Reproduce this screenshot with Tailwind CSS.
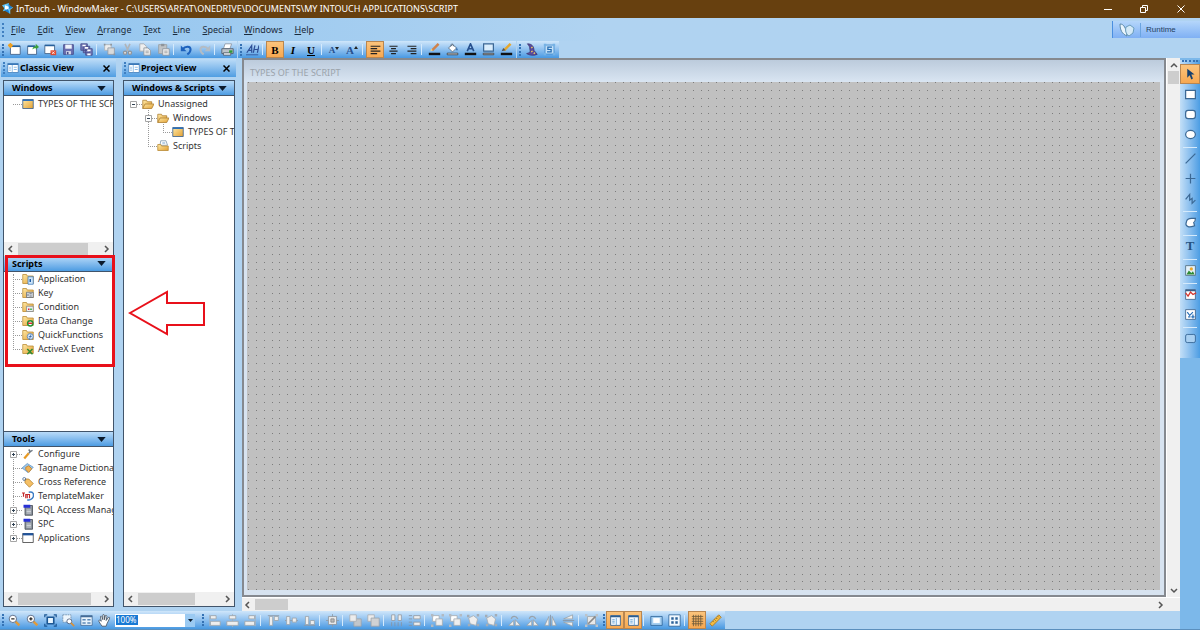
<!DOCTYPE html>
<html lang="en">
<head>
    <meta charset="UTF-8">
    <meta name="viewport" content="width=device-width, initial-scale=1.0">
    <script src="https://cdn.jsdelivr.net/npm/@tailwindcss/browser@4"></script>
    <title>InTouch - WindowMaker</title>
</head>
<body class="h-screen flex flex-col overflow-hidden bg-[#b0d3f1] font-['Noto_Sans',sans-serif] text-[9px] leading-[14px] text-[#333]">

    <!-- icons, all on a 16x16 box -->
    <svg class="absolute size-0" xmlns="http://www.w3.org/2000/svg">
        <linearGradient id="gold" x2="1" y2="1"><stop stop-color="#ffe9a6"/><stop offset="1" stop-color="#e2a033"/></linearGradient>
        <symbol id="new" viewBox="0 0 16 16"><path d="M3 4h12v10H3z" fill="#fff" stroke="#3c5a80"/><path d="M3 4h12" stroke="#27609c" stroke-width="2"/><path d="M3 0v6M0 3h6M1 1l4 4M5 1L1 5" stroke="#f0a020" stroke-width="1.5"/></symbol>
        <symbol id="open" viewBox="0 0 16 16"><path d="M2 4h11v10H2z" fill="#fff" stroke="#3c5a80"/><path d="M2 4h9" stroke="#27609c" stroke-width="2"/><path d="M8 8c0-3 2-4 4-4V1l4 4-4 3V6c-2 0-3 1-4 2" fill="#3aa03a"/></symbol>
        <symbol id="close" viewBox="0 0 16 16"><path d="M1 3h12v10H1z" fill="#fff" stroke="#3c5a80"/><path d="M1 3h12" stroke="#27609c" stroke-width="2"/><path d="M8 9h7v6H8z" fill="#e04a30"/><path d="M10 10.500l3 3M13 10.500l-3 3" stroke="#fff"/></symbol>
        <symbol id="save" viewBox="0 0 16 16"><path d="M2 2h12v12H2z" fill="#6a6eb0" stroke="#454b88"/><path d="M4 2h8v5H4z" fill="#eef2fa"/><path d="M5 10h6v4H5z" fill="#d7dbea"/><path d="M6 11h2v3H6z" fill="#454b88"/></symbol>
        <symbol id="saveall" viewBox="0 0 16 16"><g stroke="#454b88" fill="#7378b8"><path d="M1 1h8v8H1zM4 4h8v8H4zM7 7h8v8H7z"/></g><path d="M3 2h4v2H3zM6 5h4v2H6zM9 8h4v2H9zM9 13h4v2H9z" fill="#fff"/></symbol>
        <symbol id="dup" viewBox="0 0 16 16"><path d="M2 2h8v7H2z" fill="#ededed" stroke="#a9b1ba"/><path d="M6 6h8v8H6z" fill="#d9dadb" stroke="#929aa3"/><path d="M1 1h2v2H1zM9 1h2v2H9zM13 13h2v2h-2z" fill="#8d959d"/></symbol>
        <symbol id="cut" viewBox="0 0 16 16"><path d="M5 1l4 9M11 1l-4 9" stroke="#b0b4b9" stroke-width="2" fill="none"/><g fill="#ddd" stroke="#90959c" stroke-width="1.5"><circle cx="5" cy="12" r="2"/><circle cx="11" cy="12" r="2"/></g></symbol>
        <symbol id="copy" viewBox="0 0 16 16"><path d="M1 1h5l3 3v6H1z" fill="#eee" stroke="#a0a8b0"/><path d="M6 6h5l3 3v6H6z" fill="#eee" stroke="#8d949c"/><path d="M8 10h4M8 12h4" stroke="#999"/></symbol>
        <symbol id="paste" viewBox="0 0 16 16"><path d="M2 2h10v11H2z" fill="#bfc2c5" stroke="#989ea4"/><path d="M5 1h4v3H5z" fill="#8e949a"/><path d="M7 7h8v8H7z" fill="#eee" stroke="#8d949c"/><path d="M9 10h4M9 12h4" stroke="#999"/></symbol>
        <symbol id="undo" viewBox="0 0 16 16"><path d="M3 8c4-5 10-4 10 0 0 2-1 4-4 6" fill="none" stroke="#1d62bd" stroke-width="2.5"/><path d="M1 3v7h7z" fill="#1d62bd"/></symbol>
        <symbol id="redo" viewBox="0 0 16 16"><path d="M13 8C9 3 3 4 3 8c0 2 1 4 4 6" fill="none" stroke="#b3bcc5" stroke-width="2.5"/><path d="M15 3v7H8z" fill="#b3bcc5"/></symbol>
        <symbol id="print" viewBox="0 0 16 16"><path d="M5 1h8l-2 6H3z" fill="#fff" stroke="#8691a0"/><path d="M1 7h14v6H1z" fill="#bcc3ca" stroke="#4c5966"/><path d="M3 12h9v3H3z" fill="#e9edf0" stroke="#4c5966"/><path d="M10 9h4v3h-4z" fill="#2d9a36"/></symbol>
        <symbol id="font" viewBox="0 0 16 16"><path d="M1 12L7 3v9M3 9h4M9 12l2-9M14 12l2-9M10 8h5" stroke="#2e4f96" stroke-width="1.5" fill="none"/><path d="M0 14.500h15" stroke="#2e4f96"/></symbol>
        <symbol id="left" viewBox="0 0 16 16"><path d="M2 4h12M2 7h8M2 10h12M2 13h8" stroke="#222" stroke-width="1.5"/></symbol>
        <symbol id="center" viewBox="0 0 16 16"><path d="M3 4h10M5 7h6M3 10h10M5 13h6" stroke="#222" stroke-width="1.5"/></symbol>
        <symbol id="right" viewBox="0 0 16 16"><path d="M3 4h11M7 7h7M3 10h11M7 13h7" stroke="#222" stroke-width="1.5"/></symbol>
        <symbol id="linecol" viewBox="0 0 16 16"><path d="M5 9l8-8" stroke="#cf824b" stroke-width="3"/><path d="M3 10l1-3 2 2z" fill="#f6d77c"/><path d="M1 12h14v3H1z" fill="#111"/></symbol>
        <symbol id="fillcol" viewBox="0 0 16 16"><path d="M3 6l5-4 5 4-5 5z" fill="#fff" stroke="#567"/><path d="M6 4c0-4 3-4 3 0" stroke="#567" fill="none"/><path d="M13 5l2 4h-3z" fill="#3f79b8"/><path d="M1.500 12.500h13v2h-13z" fill="#fff" stroke="#333"/></symbol>
        <symbol id="textcol" viewBox="0 0 16 16"><path d="M4 10l4-9 4 9M5 7h6" stroke="#27508e" stroke-width="2" fill="none"/><path d="M1 12h14v3H1z" fill="#111"/></symbol>
        <symbol id="wincol" viewBox="0 0 16 16"><path d="M2 1h12v9H2z" fill="#d9ecfb" stroke="#3a6694" stroke-width="1.5"/><path d="M1.500 12.500h13v2h-13z" fill="#aaa" stroke="#444"/></symbol>
        <symbol id="transcol" viewBox="0 0 16 16"><path d="M5 9l8-8" stroke="#e6a72c" stroke-width="3"/><path d="M2 10l2-4 3 3z" fill="#555"/><path d="M1 12h14v3H1z" fill="#111"/></symbol>
        <symbol id="wizard" viewBox="0 0 16 16"><path d="M3 1c6 0 8 4 8 8l4 5c-5 2-10 1-13-1 4-1 5-2 4-5C6 5 5 3 3 1z" fill="#5b4b9c" stroke="#3d3774"/><path d="M8 5l1 1M8 10l1 1M11 12l1 1" stroke="#ffd858" stroke-width="2"/></symbol>
        <symbol id="symbol" viewBox="0 0 16 16"><path d="M2.500 2.500h11v11h-11z" fill="#c3e0f8" stroke="#3e88c9"/><path d="M1 1h3v3H1zM12 1h3v3h-3zM1 12h3v3H1zM12 12h3v3h-3z" fill="#75b2e5"/><path d="M11 5H6v3h4v3H5" stroke="#2069b0" fill="none" stroke-width="1.5"/></symbol>

        <symbol id="zoomout" viewBox="0 0 16 16"><path d="M9 9l5 5" stroke="#e09b3c" stroke-width="3"/><circle cx="6" cy="6" r="4.500" fill="#fff" stroke="#4a5a78"/><path d="M4 6h4" stroke="#222" stroke-width="1.5"/></symbol>
        <symbol id="zoomin" viewBox="0 0 16 16"><path d="M9 9l5 5" stroke="#e09b3c" stroke-width="3"/><circle cx="6" cy="6" r="4.500" fill="#fff" stroke="#4a5a78"/><path d="M4 6h4M6 4v4" stroke="#222" stroke-width="1.5"/></symbol>
        <symbol id="zoomfit" viewBox="0 0 16 16"><path d="M4 4h8v8H4z" fill="#e7f5ff" stroke="#1c5794" stroke-width="2"/><path d="M1 4V1h3M12 1h3v3M1 12v3h3M12 15h3v-3" stroke="#1c5794" fill="none" stroke-width="1.5"/></symbol>
        <symbol id="zoomsel" viewBox="0 0 16 16"><path d="M1 1h10v9H1z" fill="#edf6fd" stroke="#6c8aa8" stroke-dasharray="2 1"/><circle cx="9" cy="9" r="3" fill="#fff" stroke="#4a5a78"/><path d="M11 11l4 4" stroke="#d8913a" stroke-width="2"/></symbol>
        <symbol id="panels" viewBox="0 0 16 16"><path d="M1 2h14v12H1z" fill="#e9f4fd" stroke="#426b98"/><path d="M1 3h14" stroke="#426b98" stroke-width="2"/><path d="M3 6h4v2H3zM9 6h4v2H9zM3 10h4v2H3zM9 10h4v2H9z" fill="#5c88b7"/></symbol>
        <symbol id="hand" viewBox="0 0 16 16"><path d="M5 15C3 12 1 10 1 8c1-1 2 0 3 1L3 3c1-1 2 0 2 1l1 3V1c1-1 2 0 2 1v5l1-5c1-1 2 0 2 1l-1 5 3-4c1 0 2 0 1 2l-3 6-1 3z" fill="#fff" stroke="#44505e"/></symbol>

        <symbol id="al" viewBox="0 0 16 16"><path d="M2 1v14" stroke="#a6b2be"/><path d="M3 2h7v4H3zM3 9h12v5H3z" fill="#eee" stroke="#9aa2aa"/></symbol>
        <symbol id="ac" viewBox="0 0 16 16"><path d="M8 0v16" stroke="#a6b2be"/><path d="M4 2h8v4H4zM1 9h14v5H1z" fill="#eee" stroke="#9aa2aa"/></symbol>
        <symbol id="ar" viewBox="0 0 16 16"><path d="M14 1v14" stroke="#a6b2be"/><path d="M6 2h7v4H6zM1 9h12v5H1z" fill="#eee" stroke="#9aa2aa"/></symbol>
        <symbol id="at" viewBox="0 0 16 16"><path d="M1 2h14" stroke="#8d99a6"/><path d="M3 3h4v11H3zM9 3h5v5H9z" fill="#eee" stroke="#9aa2aa"/></symbol>
        <symbol id="am" viewBox="0 0 16 16"><path d="M0 8h16" stroke="#8d99a6"/><path d="M2 3h4v10H2zM9 5h5v5H9z" fill="#eee" stroke="#9aa2aa"/></symbol>
        <symbol id="ab" viewBox="0 0 16 16"><path d="M1 14h14" stroke="#8d99a6"/><path d="M3 3h4v10H3zM9 8h5v5H9z" fill="#eee" stroke="#9aa2aa"/></symbol>
        <symbol id="mid" viewBox="0 0 16 16"><path d="M8 0v16M0 8h16" stroke="#8d99a6"/><path d="M3 3h10v10H3z" fill="#e8e8e8" stroke="#8b939b"/><path d="M6 6h4v4H6z" fill="#bbb" stroke="#888"/></symbol>
        <symbol id="back" viewBox="0 0 16 16"><path d="M6 6h9v9H6z" fill="#c2c6ca" stroke="#9da4ab"/><path d="M1 1h8v8H1z" fill="#ececec" stroke="#a7adb3"/></symbol>
        <symbol id="front" viewBox="0 0 16 16"><path d="M1 1h8v8H1z" fill="#ececec" stroke="#a7adb3"/><path d="M5 5h10v10H5z" fill="#d0d2d4" stroke="#9da4ab"/></symbol>
        <symbol id="sh" viewBox="0 0 16 16"><path d="M2 1h4v7H2zM10 1h4v7h-4z" fill="#eee" stroke="#929aa2"/><path d="M2 10v5M6 10v5M10 10v5M14 10v5" stroke="#8793a0"/></symbol>
        <symbol id="sv" viewBox="0 0 16 16"><path d="M7 2h8v4H7zM7 10h8v4H7z" fill="#eee" stroke="#929aa2"/><path d="M1 2h4M1 6h4M1 10h4M1 14h4" stroke="#8793a0"/></symbol>
        <symbol id="grp" viewBox="0 0 16 16"><path d="M2 2h8v7H2z" fill="#fff" stroke="#a6acb2"/><path d="M6 6h8v8H6z" fill="#eee" stroke="#a6acb2"/><path d="M0 0h3v3H0zM13 0h3v3h-3zM0 13h3v3H0z" fill="#b2bac2"/></symbol>
        <symbol id="rot" viewBox="0 0 16 16"><path d="M2 5l6-3 5 4-2 8-7-2z" fill="#eee" stroke="#a6acb2"/><path d="M0 1h3v3H0zM12 0h3v3h-3zM12 12h3v3h-3zM1 12h3v3H1z" fill="#a4adb6"/></symbol>
        <symbol id="rotl" viewBox="0 0 16 16"><path d="M1 14h6V8zM9 7l6 7H9z" fill="#eee" stroke="#99a2aa"/><path d="M4 6c1-4 6-4 8 0" fill="none" stroke="#99a2aa" stroke-width="1.5"/></symbol>
        <symbol id="fliph" viewBox="0 0 16 16"><path d="M1 14h5V3zM10 3v11h5z" fill="#eee" stroke="#99a2aa"/><path d="M8 1v14" stroke="#8793a0"/></symbol>
        <symbol id="flipv" viewBox="0 0 16 16"><path d="M2 6h11V1zM2 10h11v5z" fill="#eee" stroke="#99a2aa"/><path d="M1 8h14" stroke="#8793a0"/></symbol>
        <symbol id="reshape" viewBox="0 0 16 16"><path d="M3 3h10v10H3z" fill="#e8e8e8" stroke="#9aa2aa"/><path d="M4 12l9-9" stroke="#888" stroke-width="2"/><path d="M0 0h3v3H0zM13 0h3v3h-3zM0 13h3v3H0zM13 13h3v3h-3z" fill="#bcc3ca"/></symbol>
        <symbol id="win" viewBox="0 0 16 16"><path d="M2 2h12v12H2z" fill="#f3f9fe" stroke="#2a5c90"/><path d="M2 3h12" stroke="#2a5c90" stroke-width="2"/><path d="M9 5v9M4 7h3M4 9h3M4 11h3" stroke="#5d9bd1"/></symbol>
        <symbol id="full" viewBox="0 0 16 16"><path d="M1 3h14v11H1z" fill="#a6cff1" stroke="#2c6299"/><path d="M4 5h8v6H4z" fill="#fff"/></symbol>
        <symbol id="expand" viewBox="0 0 16 16"><path d="M1 1h14v14H1z" fill="#f2f9ff" stroke="#2c6299"/><path d="M4 4h3v3H4zM9 4h3v3H9zM4 9h3v3H4zM9 9h3v3H9z" fill="#2c6299"/></symbol>
        <symbol id="grid" viewBox="0 0 16 16"><path d="M1 3h14M1 6h14M1 9h14M1 12h14M3 1v14M6 1v14M9 1v14M12 1v14" stroke="#6d5a3a"/></symbol>
        <symbol id="ruler" viewBox="0 0 16 16"><path d="M1 12L12 1l3 3L4 15z" fill="#f5bc42" stroke="#a8741c"/><path d="M5 9l1 1M7 7l1 1M9 5l1 1M11 3l1 1" stroke="#604310"/></symbol>

        <symbol id="pointer" viewBox="0 0 16 16"><path d="M4 1v11l3-3 2 5 2-1-2-5h4z" fill="#15406f"/></symbol>
        <symbol id="rect" viewBox="0 0 16 16"><path d="M2 3h12v10H2z" fill="#fff" stroke="#3b6894" stroke-width="1.5"/></symbol>
        <symbol id="rrect" viewBox="0 0 16 16"><rect x="2" y="3" width="12" height="10" rx="3" fill="#fff" stroke="#3b6894" stroke-width="1.5"/></symbol>
        <symbol id="oval" viewBox="0 0 16 16"><ellipse cx="8" cy="8" rx="6" ry="5" fill="#fff" stroke="#3b6894" stroke-width="1.5"/></symbol>
        <symbol id="line" viewBox="0 0 16 16"><path d="M2 14L14 2" stroke="#3b6894" stroke-width="1.5"/></symbol>
        <symbol id="cross" viewBox="0 0 16 16"><path d="M8 2v12M2 8h12" stroke="#3b6894" stroke-width="1.5"/></symbol>
        <symbol id="poly" viewBox="0 0 16 16"><path d="M2 9l5-6v7l3-2v6l4-4" fill="none" stroke="#3b6894" stroke-width="1.5"/></symbol>
        <symbol id="shape" viewBox="0 0 16 16"><path d="M3 7c1-4 4-4 6-4h5c0 3 0 4-2 5l1 4c-3 1-5 2-8 1-3-1-3-3-2-6z" fill="#fff" stroke="#3b6894" stroke-width="1.5"/></symbol>
        <symbol id="bitmap" viewBox="0 0 16 16"><path d="M2 2h12v12H2z" fill="#e4f2fc" stroke="#4f6a7a"/><path d="M3 13l3-5 3 3 2-2 2 4z" fill="#2f8a33"/><circle cx="9" cy="6" r="2" fill="#eda72b"/></symbol>
        <symbol id="trend" viewBox="0 0 16 16"><path d="M2 2h12v12H2z" fill="#fff" stroke="#3b5f86"/><path d="M2 3h12" stroke="#3b5f86" stroke-width="2"/><path d="M2 6l3 4 3-5 3 3 4-2" fill="none" stroke="#d3352c" stroke-width="1.5"/></symbol>
        <symbol id="hist" viewBox="0 0 16 16"><path d="M2 2h12v12H2z" fill="#fff" stroke="#3b5f86"/><path d="M4 5l3 4 4-4M5 11h3M11 8v5M9 11h4" fill="none" stroke="#2a70b8" stroke-width="1.5"/></symbol>
        <symbol id="btn" viewBox="0 0 16 16"><rect x="2" y="3" width="12" height="10" rx="2" fill="#a9d0f2" stroke="#2c5c8d"/></symbol>

        <symbol id="view" viewBox="0 0 16 16"><path d="M1 2h14v12H1z" fill="#fff" stroke="#3a78b8"/><path d="M1 3h14" stroke="#3a78b8" stroke-width="2"/><path d="M7 4v10M3 7h2M3 9h2M3 11h2M9 7h4M9 10h4" stroke="#6aa7dd"/></symbol>
        <symbol id="twin" viewBox="0 0 16 16"><path d="M1 2h14v12H1z" fill="url(#gold)" stroke="#28548a"/><path d="M1 3h14" stroke="#2c70b8" stroke-width="2"/></symbol>
        <symbol id="folder" viewBox="0 0 16 16"><path d="M1 14V3h5l1 2h6v3" fill="url(#gold)" stroke="#a97a2b"/><path d="M1 14l3-6h12l-3 6z" fill="url(#gold)" stroke="#a97a2b"/></symbol>
        <symbol id="cfolder" viewBox="0 0 16 16"><path d="M1 14V2h5l1 2h8v10z" fill="url(#gold)" stroke="#b5852f"/></symbol>
        <symbol id="f-app" viewBox="0 0 16 16"><use href="#cfolder"/><path d="M8 5h7v10H8z" fill="#cfe6fa" stroke="#3a77b8"/><path d="M11 8v4" stroke="#1f5ca6" stroke-width="2"/></symbol>
        <symbol id="f-key" viewBox="0 0 16 16"><use href="#cfolder"/><path d="M6 7h9v7H6z" fill="#d9dde2" stroke="#606b78"/><path d="M8 9v3M10 9h3M10 12h3" stroke="#4b5663"/></symbol>
        <symbol id="f-cond" viewBox="0 0 16 16"><use href="#cfolder"/><path d="M6 7h9v7H6z" fill="#eceff1" stroke="#808992"/><path d="M8 10h2v2H8z" fill="#d23"/><path d="M11 10h2v2h-2z" fill="#2a3"/></symbol>
        <symbol id="f-data" viewBox="0 0 16 16"><use href="#cfolder"/><circle cx="11" cy="11" r="3.500" fill="#fff" stroke="#239034" stroke-width="2"/><path d="M8 11h6" stroke="#d03030" stroke-width="2"/></symbol>
        <symbol id="f-quick" viewBox="0 0 16 16"><use href="#cfolder"/><circle cx="11" cy="10" r="4" fill="#d9e9fa" stroke="#4a78b0"/><path d="M12 7l-2 7M9 10h4" stroke="#2c62a5"/></symbol>
        <symbol id="f-ax" viewBox="0 0 16 16"><use href="#cfolder"/><path d="M7 8l7 7M14 8l-7 7" stroke="#2b8b32" stroke-width="2"/></symbol>
        <symbol id="f-script" viewBox="0 0 16 16"><path d="M5 1h7l2 6H4z" fill="#fff" stroke="#7790a8"/><path d="M1 14V6h4l1 2h9v6z" fill="url(#gold)" stroke="#b5852f"/><path d="M7 4h4" stroke="#4480b8"/></symbol>
        <symbol id="config" viewBox="0 0 16 16"><path d="M3 14l6-7" stroke="#e79a25" stroke-width="3"/><path d="M9 7l3-3M9 2l2 3M14 3l-3 2" stroke="#6d7680" stroke-width="2"/></symbol>
        <symbol id="tagdict" viewBox="0 0 16 16"><path d="M0 8l7-6 8 5-7 7z" fill="#9cc7ec" stroke="#5f92c0"/><path d="M5 7l4-2 4 4-4 5-4-4z" fill="#f1b356" stroke="#b77a28"/></symbol>
        <symbol id="xref" viewBox="0 0 16 16"><path d="M4 4h5l6 6-5 5-6-6z" fill="#f5c065" stroke="#ae7a26"/><circle cx="3" cy="4" r="2" fill="none" stroke="#3c6090"/></symbol>
        <symbol id="tmaker" viewBox="0 0 16 16"><path d="M9 3c6-1 7 2 6 6-1 3-5 5-8 4" fill="none" stroke="#3b7cc4" stroke-width="2"/><path d="M0 4h4M2 4v5M5 11V6h2v5M7 6h3v5" fill="none" stroke="#c2282c" stroke-width="1.5"/></symbol>
        <symbol id="server" viewBox="0 0 16 16"><path d="M4 2h10v13H4z" fill="#8d949d" stroke="#3c434c"/><path d="M2 1h9v4H2z" fill="#2730d6"/><path d="M6 8h6M6 10h6M6 12h6" stroke="#e1e5e9"/></symbol>
        <symbol id="appwin" viewBox="0 0 16 16"><path d="M1 2h14v12H1z" fill="#fff" stroke="#333"/><path d="M1 3h14" stroke="#20549c" stroke-width="3"/></symbol>
        <symbol id="down" viewBox="0 0 10 6"><path d="M0 0h10L5 6z" fill="#0b1a2c"/></symbol>
        <symbol id="ch-l" viewBox="0 0 8 8"><path d="M5 1L2 4l3 3" fill="none" stroke="#555" stroke-width="1.5"/></symbol>
        <symbol id="ch-r" viewBox="0 0 8 8"><path d="M3 1l3 3-3 3" fill="none" stroke="#555" stroke-width="1.5"/></symbol>
        <symbol id="ch-u" viewBox="0 0 8 8"><path d="M1 6l3-3 3 3" fill="none" stroke="#555" stroke-width="1.5"/></symbol>
        <symbol id="ch-d" viewBox="0 0 8 8"><path d="M1 2l3 3 3-3" fill="none" stroke="#555" stroke-width="1.5"/></symbol>
        <symbol id="plus" viewBox="0 0 7 7"><path d="M.5.5h6v6h-6z" fill="#fff" stroke="#a5a5a5"/><path d="M2 3.500h3M3.500 2v3" stroke="#345"/></symbol>
        <symbol id="minus" viewBox="0 0 7 7"><path d="M.5.5h6v6h-6z" fill="#fff" stroke="#a5a5a5"/><path d="M2 3.500h3" stroke="#345"/></symbol>
    </svg>

    <header class="h-[18px] shrink-0 bg-[#67400f] text-white flex items-center pl-[2px]">
        <svg class="size-3 shrink-0" viewBox="0 0 16 16"><path d="M0 3l9-3 1 4 5 2-4 3v6l-5-5-5 1 2-4z" fill="#5fc3f5"/><path d="M4 3l5 2-1 5-4-2z" fill="#fff"/><path d="M8 1l6 5-4 2zM3 10l5-2 2 6z" fill="#1c7fd0"/></svg>
        <h1 class="ml-[2px] flex-1 whitespace-nowrap">InTouch - WindowMaker - C:\USERS\ARFAT\ONEDRIVE\DOCUMENTS\MY INTOUCH APPLICATIONS\SCRIPT</h1>
        <button class="w-9 flex justify-center" aria-label="Minimize"><svg class="size-2" viewBox="0 0 8 8"><path d="M0 4.500h8" stroke="#fff"/></svg></button>
        <button class="w-9 flex justify-center" aria-label="Restore"><svg class="size-2" viewBox="0 0 8 8"><path d="M.5 2.500h5v5h-5zM2.500 2V.5h5v5H6" stroke="#fff" fill="none"/></svg></button>
        <button class="w-[38px] flex justify-center" aria-label="Close"><svg class="size-2" viewBox="0 0 8 8"><path d="M.5.5l7 7M7.500.5l-7 7" stroke="#fff"/></svg></button>
    </header>

    <div class="h-[23px] shrink-0 flex items-center bg-linear-to-r from-[#92c5ef] to-[#b0d3f1] to-50%">
        <span class="ml-[2px] w-[2px] h-[14px] border-l-2 border-dotted border-[#3f7fc0]"></span>
        <nav class="ml-[7px] flex gap-3 text-[#1a2a3a]">
            <button><u>F</u>ile</button>
            <button><u>E</u>dit</button>
            <button><u>V</u>iew</button>
            <button><u>A</u>rrange</button>
            <button><u>T</u>ext</button>
            <button><u>L</u>ine</button>
            <button><u>S</u>pecial</button>
            <button><u>W</u>indows</button>
            <button><u>H</u>elp</button>
        </nav>
        <button class="ml-auto w-[88px] h-[17px] flex items-center border-l border-[#4a8fe0] bg-linear-to-b from-[#b5d6fa] to-[#7fb0f4] font-['Liberation_Sans',sans-serif] text-[8px] text-[#24405f]">
            <svg class="size-4 ml-[6px]" viewBox="0 0 16 16"><path d="M1 2c4 0 6 4 7 12C3 12 1 8 1 2z" fill="#e8f4fc" stroke="#5d8aa8"/><path d="M7 5l4-2 4 3-1 5-4 3c-3-2-4-5-3-9z" fill="#d3e9f7" stroke="#6a9dbc"/></svg>
            <span class="ml-[5px] pl-[5px] border-l border-[#6ba4e0]">Runtime</span>
        </button>
    </div>

    <div id="top" class="h-[17px] shrink-0 flex gap-px"></div>

    <div class="flex-1 min-h-0 flex border-b border-[#5b8fbd]">
        <div class="flex-1 min-w-0 flex flex-col">
            <main class="relative flex-1 min-h-0 flex gap-[6px] pl-px">

                <aside class="w-[115px] shrink-0 pt-px pb-1 flex flex-col gap-[3px]">
                    <div class="h-[18px] flex items-center bg-linear-to-b from-[#bcdcf7] to-[#4f9ee2] font-bold text-black">
                        <span class="ml-[2px] w-[2px] h-[12px] border-l-2 border-dotted border-[#3f7fc0]"></span>
                        <svg class="size-3 ml-[2px]"><use href="#view"/></svg>
                        <h2 class="ml-px flex-1">Classic View</h2>
                        <button class="mr-[6px]" aria-label="Close Classic View"><svg class="size-[7px]" viewBox="0 0 7 7"><path d="M.5.5l6 6M6.500.5l-6 6" stroke="#000" stroke-width="1.5"/></svg></button>
                    </div>
                    <div class="flex-1 min-h-0 mx-[2px] flex flex-col border border-[#41546a] bg-white">
                        <section class="flex-1 min-h-0 flex flex-col">
                            <button class="h-[15px] shrink-0 pl-2 pr-[7px] flex items-center justify-between border-b border-[#41546a] bg-linear-to-b from-[#b9dbf8] to-[#4c9ce2] font-bold text-black">Windows <svg class="w-[9px] h-[5px]"><use href="#down"/></svg></button>
                            <ul class="flex-1 overflow-hidden whitespace-nowrap pt-px">
                                <li class="flex items-center"><span class="ml-[9px] w-[9px] shrink-0 border-t border-dotted border-[#999]"></span><svg class="size-3 shrink-0"><use href="#twin"/></svg><span class="ml-1">TYPES OF THE SCRIPT</span></li>
                            </ul>
                            <div class="h-[14px] shrink-0 flex items-center bg-[#f0f0f0]"><svg class="size-2 mx-[3px]"><use href="#ch-l"/></svg><span class="w-[70px] h-[12px] bg-[#cdcdcd]"></span><svg class="size-2 ml-auto mr-[3px]"><use href="#ch-r"/></svg></div>
                        </section>
                        <section class="relative flex-1 min-h-0 flex flex-col">
                            <button class="h-[16px] shrink-0 pl-2 pr-[7px] flex items-center justify-between border-b border-[#41546a] bg-linear-to-b from-[#b9dbf8] to-[#4c9ce2] font-bold text-black">Scripts <svg class="w-[9px] h-[5px]"><use href="#down"/></svg></button>
                            <ul class="relative flex-1 overflow-hidden whitespace-nowrap">
                                <li class="absolute left-[9px] top-[2px] h-[76px] border-l border-dotted border-[#999]"></li>
                                <li class="flex items-center"><span class="ml-[9px] w-[9px] border-t border-dotted border-[#999]"></span><svg class="size-3"><use href="#f-app"/></svg><span class="ml-1">Application</span></li>
                                <li class="flex items-center"><span class="ml-[9px] w-[9px] border-t border-dotted border-[#999]"></span><svg class="size-3"><use href="#f-key"/></svg><span class="ml-1">Key</span></li>
                                <li class="flex items-center"><span class="ml-[9px] w-[9px] border-t border-dotted border-[#999]"></span><svg class="size-3"><use href="#f-cond"/></svg><span class="ml-1">Condition</span></li>
                                <li class="flex items-center"><span class="ml-[9px] w-[9px] border-t border-dotted border-[#999]"></span><svg class="size-3"><use href="#f-data"/></svg><span class="ml-1">Data Change</span></li>
                                <li class="flex items-center"><span class="ml-[9px] w-[9px] border-t border-dotted border-[#999]"></span><svg class="size-3"><use href="#f-quick"/></svg><span class="ml-1">QuickFunctions</span></li>
                                <li class="flex items-center"><span class="ml-[9px] w-[9px] border-t border-dotted border-[#999]"></span><svg class="size-3"><use href="#f-ax"/></svg><span class="ml-1">ActiveX Event</span></li>
                            </ul>
                            <!-- highlight -->
                            <div class="absolute -top-px left-px -right-[2px] h-28 border-3 border-[#e8101a] pointer-events-none"></div>
                            <svg class="absolute left-[124px] top-[34px] w-[80px] h-[46px] z-10" viewBox="0 0 80 46"><path d="M2 23L39 2v11h37v22H39v9z" fill="#fff" stroke="#e8101a" stroke-width="2"/></svg>
                        </section>
                        <section class="flex-1 min-h-0 flex flex-col">
                            <button class="h-[16px] shrink-0 pl-2 pr-[7px] flex items-center justify-between border-y border-[#41546a] bg-linear-to-b from-[#b9dbf8] to-[#4c9ce2] font-bold text-black">Tools <svg class="w-[9px] h-[5px]"><use href="#down"/></svg></button>
                            <ul class="relative flex-1 overflow-hidden whitespace-nowrap">
                                <li class="absolute left-[9px] top-[7px] h-[84px] border-l border-dotted border-[#999]"></li>
                                <li class="relative flex items-center"><svg class="size-[7px] ml-[6px]"><use href="#plus"/></svg><span class="w-[5px] border-t border-dotted border-[#999]"></span><svg class="size-3"><use href="#config"/></svg><span class="ml-1">Configure</span></li>
                                <li class="flex items-center"><span class="ml-[9px] w-[9px] shrink-0 border-t border-dotted border-[#999]"></span><svg class="size-3 shrink-0"><use href="#tagdict"/></svg><span class="ml-1">Tagname Dictionary</span></li>
                                <li class="flex items-center"><span class="ml-[9px] w-[9px] border-t border-dotted border-[#999]"></span><svg class="size-3"><use href="#xref"/></svg><span class="ml-1">Cross Reference</span></li>
                                <li class="flex items-center"><span class="ml-[9px] w-[9px] border-t border-dotted border-[#999]"></span><svg class="size-3"><use href="#tmaker"/></svg><span class="ml-1">TemplateMaker</span></li>
                                <li class="relative flex items-center"><svg class="size-[7px] ml-[6px] shrink-0"><use href="#plus"/></svg><span class="w-[5px] shrink-0 border-t border-dotted border-[#999]"></span><svg class="size-3 shrink-0"><use href="#server"/></svg><span class="ml-1">SQL Access Manager</span></li>
                                <li class="relative flex items-center"><svg class="size-[7px] ml-[6px]"><use href="#plus"/></svg><span class="w-[5px] border-t border-dotted border-[#999]"></span><svg class="size-3"><use href="#server"/></svg><span class="ml-1">SPC</span></li>
                                <li class="relative flex items-center"><svg class="size-[7px] ml-[6px]"><use href="#plus"/></svg><span class="w-[5px] border-t border-dotted border-[#999]"></span><svg class="size-3"><use href="#appwin"/></svg><span class="ml-1">Applications</span></li>
                            </ul>
                            <div class="h-[14px] shrink-0 flex items-center bg-[#f0f0f0]"><svg class="size-2 mx-[3px]"><use href="#ch-l"/></svg><span class="w-[73px] h-[12px] bg-[#cdcdcd]"></span><svg class="size-2 ml-auto mr-[3px]"><use href="#ch-r"/></svg></div>
                        </section>
                    </div>
                </aside>

                <aside class="w-[114px] shrink-0 pt-px pb-1 flex flex-col gap-[3px]">
                    <div class="h-[18px] flex items-center bg-linear-to-b from-[#bcdcf7] to-[#4f9ee2] font-bold text-black">
                        <span class="ml-[2px] w-[2px] h-[12px] border-l-2 border-dotted border-[#3f7fc0]"></span>
                        <svg class="size-3 ml-[2px]"><use href="#view"/></svg>
                        <h2 class="ml-px flex-1">Project View</h2>
                        <button class="mr-[6px]" aria-label="Close Project View"><svg class="size-[7px]" viewBox="0 0 7 7"><path d="M.5.5l6 6M6.500.5l-6 6" stroke="#000" stroke-width="1.5"/></svg></button>
                    </div>
                    <div class="flex-1 min-h-0 mx-px flex flex-col border border-[#41546a] bg-white">
                        <button class="h-[15px] shrink-0 pl-2 pr-[7px] flex items-center justify-between border-b border-[#41546a] bg-linear-to-b from-[#b9dbf8] to-[#4c9ce2] font-bold text-black whitespace-nowrap">Windows &amp; Scripts <svg class="w-[9px] h-[5px]"><use href="#down"/></svg></button>
                        <ul class="relative flex-1 overflow-hidden whitespace-nowrap pt-px">
                            <li class="absolute left-[24px] top-[14px] h-[37px] border-l border-dotted border-[#999]"></li>
                            <li class="absolute left-[39px] top-[28px] h-[9px] border-l border-dotted border-[#999]"></li>
                            <li class="flex items-center"><svg class="size-[7px] ml-[6px]"><use href="#minus"/></svg><span class="w-[5px] border-t border-dotted border-[#999]"></span><svg class="size-3"><use href="#folder"/></svg><span class="ml-1">Unassigned</span></li>
                            <li class="relative flex items-center"><svg class="size-[7px] ml-[21px]"><use href="#minus"/></svg><span class="w-[5px] border-t border-dotted border-[#999]"></span><svg class="size-3"><use href="#folder"/></svg><span class="ml-1">Windows</span></li>
                            <li class="flex items-center"><span class="ml-[39px] w-[9px] shrink-0 border-t border-dotted border-[#999]"></span><svg class="size-3 shrink-0"><use href="#twin"/></svg><span class="ml-1">TYPES OF THE SCRIPT</span></li>
                            <li class="flex items-center"><span class="ml-[24px] w-[9px] border-t border-dotted border-[#999]"></span><svg class="size-3"><use href="#f-script"/></svg><span class="ml-1">Scripts</span></li>
                        </ul>
                        <div class="h-[14px] shrink-0 flex items-center bg-[#f0f0f0]"><svg class="size-2 mx-[3px]"><use href="#ch-l"/></svg><span class="w-[57px] h-[12px] bg-[#cdcdcd]"></span><svg class="size-2 ml-auto mr-[3px]"><use href="#ch-r"/></svg></div>
                    </div>
                </aside>

                <div class="flex-1 min-w-0 flex flex-col bg-[#f0f0f0]">
                    <div class="flex-1 min-h-0 flex">
                        <section class="flex-1 min-w-0 flex flex-col border-2 border-[#85898f] bg-[#d7e3f0] px-[3px] pb-[5px]">
                            <h2 class="h-[22px] shrink-0 -mx-[3px] px-[6px] pt-[6px] bg-linear-to-b from-[#bccbdc] to-[#d9e5f2] text-[#9ba3ab]">TYPES OF THE SCRIPT</h2>
                            <svg class="w-full flex-1 min-h-0 pr-px">
                                <!-- five dots per tile in each direction -->
                                <pattern id="dots" width="39" height="39" patternUnits="userSpaceOnUse">
                                    <path d="M1 .5h39M1 8.500h39M1 16.500h39M1 24.500h39M1 31.500h39" stroke="#7c7c7c" stroke-dasharray="1 7 1 7 1 7 1 6 1 7"/>
                                </pattern>
                                <rect width="100%" height="100%" fill="#c0c0c0"/>
                                <rect width="100%" height="100%" fill="url(#dots)"/>
                            </svg>
                        </section>
                        <div class="w-[14px] pt-[2px] flex flex-col items-center border-l border-white">
                            <svg class="size-2 my-px shrink-0"><use href="#ch-u"/></svg>
                            <span class="w-[11px] h-[13px] mt-px bg-[#cdcdcd]"></span>
                            <svg class="size-2 mt-auto mb-[2px]"><use href="#ch-d"/></svg>
                        </div>
                    </div>
                    <div class="h-[14px] shrink-0 flex items-center border-t border-white"><svg class="size-2 ml-[2px] mr-[3px]"><use href="#ch-l"/></svg><span class="w-[33px] h-[11px] bg-[#cdcdcd]"></span><svg class="size-2 ml-auto mr-4"><use href="#ch-r"/></svg></div>
                </div>
            </main>
            <div id="bottom" class="h-[18px] shrink-0 flex"></div>
        </div>

        <div class="w-5 shrink-0 bg-[#7cb8ea] pt-[2px]">
            <div id="tools" class="flex flex-col pb-[10px] bg-linear-to-r from-[#c3dff7] to-[#4b9de3]"></div>
        </div>
    </div>

    <script>
        const $ = (el) => document.querySelector(el)

        // "|" is a separator, "*" marks a pressed button
        const bars = {
            top: [
                ["new:New Window", "open:Open Window", "close:Close Window", "save:Save Window", "saveall:Save All", "|", "dup:Duplicate", "cut:Cut", "copy:Copy", "paste:Paste", "|", "undo:Undo", "redo:Redo", "|", "print:Print"],
                ["font:Fonts", "|", "*B:Bold", "I:Italic", "U:Underline", "|", "A-:Reduce Font", "A+:Enlarge Font", "|", "*left:Left Justified", "center:Centered", "right:Right Justified", "|", "linecol:Line Color", "fillcol:Fill Color", "textcol:Text Color", "wincol:Window Color", "transcol:Transparent Color"],
                ["wizard:Wizards", "symbol:Embed Symbol"]
            ],
            bottom: [
                ["zoomout:Zoom Out", "zoomin:Zoom In", "zoomfit:Zoom to Normal", "zoomsel:Zoom to Selected", "panels:Panels", "hand:Pan", "zoom"],
                ["al:Align Left", "ac:Align Center", "ar:Align Right", "|", "at:Align Top", "am:Align Middle", "ab:Align Bottom", "|", "mid:Align Centerpoints", "|", "back:Send to Back", "front:Bring to Front", "|", "sh:Space Horizontal", "sv:Space Vertical", "|", "grp:Make Symbol", "grp:Break Symbol", "rot:Make Cell", "rot:Break Cell", "|", "rotl:Rotate Left", "rotl:Rotate Right", "fliph:Flip Horizontal", "flipv:Flip Vertical", "|", "reshape:Reshape"],
                ["*win:Classic View", "*win:Project View", "|", "full:Full Screen", "expand:Hide All", "|", "*grid:Snap to Grid", "ruler:Ruler"]
            ]
        }

        const glyphs = {
            "B": `<b>B</b>`,
            "I": `<b><i>I</i></b>`,
            "U": `<b><u>U</u></b>`,
            "T": `<b class="text-[13px] text-[#24517f]">T</b>`,
            "A-": `<b class="text-[9px] text-[#27508e]">A</b><svg class="size-1 mb-1" viewBox="0 0 4 4"><path d="M0 1h4L2 4z" fill="#222"/></svg>`,
            "A+": `<b class="text-[#27508e]">A</b><svg class="size-1 mb-1" viewBox="0 0 4 4"><path d="M0 3h4L2 0z" fill="#222"/></svg>`
        }

        const face = (id) => glyphs[id] || `<svg class="size-[13px]"><use href="#${id}"/></svg>`

        const item = (s) => {
            if (s === "|") return `<span class="w-[3px] h-[11px] mx-px border-l border-[#d4eafc]"></span>`
            if (s === "zoom") return `<label class="sr-only" for="zoom">Zoom</label><div class="ml-[2px] mr-1 flex items-center w-[80px] h-[13px] bg-white"><input id="zoom" value="100%" class="w-[22px] h-[10px] ml-px bg-[#1979d4] text-white text-[8px]"><button class="ml-auto w-[10px] h-[13px] bg-[#9bcaf2] flex items-center justify-center" aria-label="Zoom levels"><svg class="w-[5px] h-[3px]"><use href="#down"/></svg></button></div>`
            const on = s[0] === "*"
            const [id, label] = s.replace("*", "").split(":")
            return `<button title="${label}" aria-label="${label}" class="w-[18px] h-full flex items-center justify-center font-['Liberation_Serif',serif] text-[11px] text-black ${on ? "bg-linear-to-b from-[#fbc47c] to-[#f7a850] border border-[#b98650]" : ""}">${face(id)}</button>`
        }

        for (const name in bars) {
            $("#" + name).innerHTML = bars[name].map((bar) => `
                <div role="toolbar" class="flex items-center pr-px bg-linear-to-b from-[#cfe6fa] to-[#4799e2]">
                    <span class="ml-[2px] mr-px w-[2px] h-[12px] border-l-2 border-dotted border-[#3572b4]"></span>
                    ${bar.map(item).join("")}
                </div>`).join("")
        }

        const tools = ["*pointer:Selector", "rect:Rectangle", "rrect:Rounded Rectangle", "oval:Ellipse", "|", "line:Line", "cross:H/V Line", "poly:Polyline", "|", "shape:Polygon", "|", "T:Text", "|", "bitmap:Bitmap", "|", "trend:Real-time Trend", "hist:Historical Trend", "|", "btn:Button"]
        $("#tools").innerHTML = `<span class="h-[4px] mx-[2px] border-t-2 border-dotted border-[#3572b4]"></span>` + tools.map((s) => {
            if (s === "|") return `<span class="h-[4px] pt-px mx-[3px] border-b border-[#d4eafc]"></span>`
            const on = s[0] === "*"
            const [id, label] = s.replace("*", "").split(":")
            return `<button title="${label}" aria-label="${label}" class="w-5 h-5 flex items-center justify-center font-['Liberation_Serif',serif] ${on ? "bg-linear-to-b from-[#fbc47c] to-[#f7a850] border border-[#b98650]" : ""}">${face(id)}</button>`
        }).join("")
    </script>
</body>
</html>
